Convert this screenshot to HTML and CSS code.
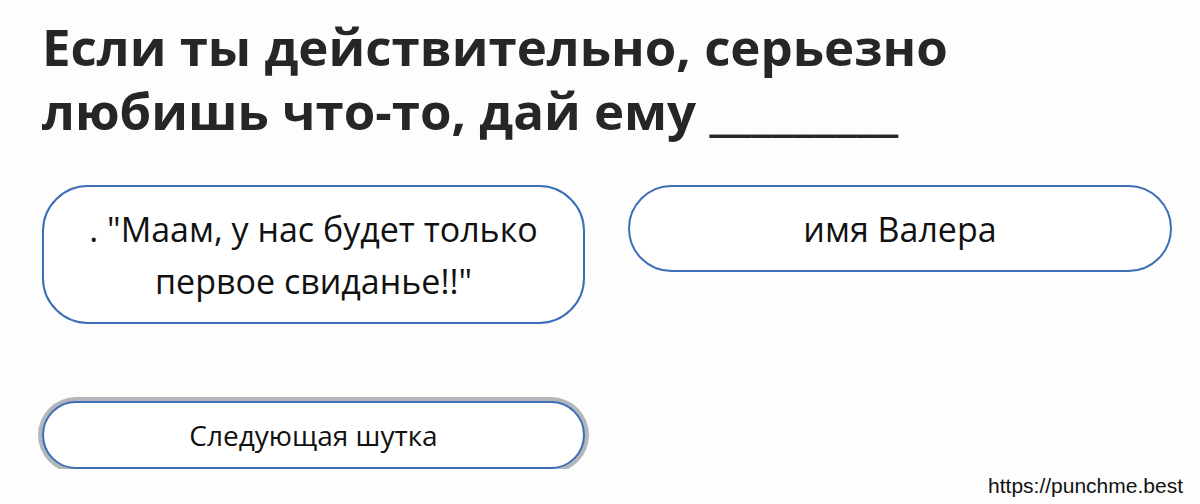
FILE: index.html
```html
<!DOCTYPE html>
<html lang="ru">
<head>
  <meta charset="UTF-8" />
  <title>Шутки</title>
  <link rel="stylesheet" href="styles.css">
</head>
<body>
  <div class="page">
    <h1 class="question">Если ты действительно, серьезно любишь что-то, дай ему _________</h1>

    <!-- Answer options -->
    <div class="answers">
      <div class="answer">. "Маам, у нас будет только первое свиданье!!"</div>
      <div class="answer">имя Валера</div>
    </div>

    <div class="next-row">
      <button class="next-btn">Следующая шутка</button>
    </div>
  </div>

  <div class="site-link">https://punchme.best</div>
</body>
</html>
```

FILE: styles.css
```css
body {
  margin: 0;
  padding: 0;
  background: #fdfdfd;
  font-family: "Open Sans", sans-serif;
  color: #111;
}

.page {
  padding: 14px 0 0 42px;
  width: 1130px;
}

/* Question */
.question {
  margin: 0;
  width: 960px;
  font-size: 51px;
  font-weight: 700;
  line-height: 64px;
  color: #262626;
}

/* Answer cards */
.answers {
  display: grid;
  grid-template-columns: 543px 544px;
  gap: 43px;
  align-items: start;
  margin-top: 43px;
}

.answer {
  border: 2px solid #3d6fb6;
  border-radius: 46px;
  background: #fff;
  padding: 16px 30px 15px;
  min-height: 52px;
  font-size: 34px;
  line-height: 52px;
  text-align: center;
}

/* Next button */
.next-row {
  margin-top: 77px;
  width: 543px;
}

.next-btn {
  display: block;
  width: 100%;
  height: 68px;
  border: 2px solid #3d6fb6;
  border-radius: 36px;
  background: #fff;
  box-shadow: 0 0 0 4px #b3b6ba;
  font-family: "Open Sans", sans-serif;
  font-size: 28px;
  color: #111;
  cursor: pointer;
}

.site-link {
  position: absolute;
  right: 17px;
  bottom: 6px;
  font-family: "Liberation Sans", Arial, sans-serif;
  font-size: 21px;
  color: #111;
}
```
